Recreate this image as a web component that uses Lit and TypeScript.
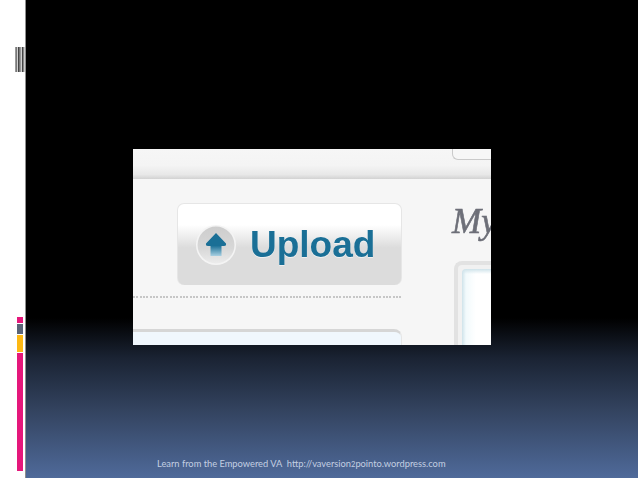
import { LitElement, html, css } from "lit";
import { customElement } from "lit/decorators.js";

@customElement("app-root")
export class AppRoot extends LitElement {
  static styles = css`
    :host { display: block; width: 638px; height: 478px; overflow: hidden; }
    .slide { width: 638px; height: 478px; display: flex; background: #fff; }
    .rail { width: 25px; flex: none; display: flex; flex-direction: column; }
    .bars { width: 10px; height: 25px; margin: 47px 0 0 15px; background: linear-gradient(90deg, #999 0 1px, #777 1px 2px, #d0d0d0 2px 3px, #444 3px 4px, #777 4px 5px, #999 5px 6px, #d0d0d0 6px 7px, #444 7px 8px, #888 8px 9px, #ccc 9px 10px); }
    .stack { width: 6px; margin: 245px 0 0 17px; display: flex; flex-direction: column; }
    .s1 { height: 6px; background: #e5177b; }
    .s2 { height: 10px; margin-top: 1px; background: #5a6478; }
    .s3 { height: 17px; margin-top: 1px; background: #fdb813; }
    .s4 { height: 118px; margin-top: 1px; background: #e5177b; }
    .main { width: 613px; flex: none; box-sizing: border-box; border-left: 1px solid #8f8f8f; background: linear-gradient(180deg, #000 0, #000 318px, #1a2333 358px, #33435f 410px, #4f6a9a 478px); padding: 149px 0 0 107px; display: flex; flex-direction: column; }
    .pic { width: 358px; height: 196px; flex: none; background: #f6f6f6; overflow: hidden; display: flex; flex-direction: column; }
    .topbar { height: 30px; flex: none; background: linear-gradient(180deg, #f6f6f6 0, #f4f4f4 55%, #e8e8e8 85%, #d2d2d2 100%); display: flex; justify-content: flex-end; }
    .tab { width: 39px; height: 11px; box-sizing: border-box; border: 1px solid #cacaca; border-top: 0; border-right: 0; border-bottom-left-radius: 6px; background: #f7f7f7; }
    .body { flex: 1; display: flex; }
    .left { width: 269px; flex: none; display: flex; flex-direction: column; }
    .btn { margin: 24px 0 0 44px; width: 225px; height: 82px; flex: none; box-sizing: border-box; border-radius: 7px; background: linear-gradient(180deg, #fff 0, #fff 26%, #dcdcdc 54%, #dcdcdc 100%); border: 1px solid #e6e6e6; border-bottom: 0; display: flex; align-items: center; padding-left: 17px; gap: 13px; }
    .ic { width: 42px; height: 42px; flex: none; display: block; filter: blur(0.4px); }
    .label { font: bold 37px/1 "Liberation Sans", sans-serif; color: #1a6f96; text-shadow: 0 1px 0 rgba(255,255,255,0.55); filter: blur(0.35px); }
    .dots { margin-top: 11px; height: 2px; flex: none; background: repeating-linear-gradient(90deg, #c6c6c6 0 2px, transparent 2px 3.33px); }
    .panel { margin-top: 31px; height: 17px; flex: none; box-sizing: border-box; background: #f0f7fd; border-top: 3px solid #d6d6d6; border-top-right-radius: 8px; border-right: 1px solid #e6e6e6; }
    .right { flex: 1; display: flex; flex-direction: column; padding-left: 52px; overflow: hidden; }
    .my { margin: 25px 0 0 -2px; font: italic 35px/1 "Liberation Serif", serif; color: #6d6f78; -webkit-text-stroke: 0.6px #6d6f78; white-space: nowrap; height: 36px; filter: blur(0.35px); }
    .frame { flex: 1; margin-top: 21px; box-sizing: border-box; border: 4px solid #e2e2e2; border-right: 0; border-bottom: 0; border-top-left-radius: 8px; padding: 4px 0 0 4px; background: #f1f1f1; }
    .inner { height: 100%; border-top-left-radius: 4px; background: linear-gradient(180deg, #cfe3ea, rgba(255,255,255,0) 5px), linear-gradient(90deg, #cfe3ea, #f2fafc 4px, #fff 14px); }
    .foot { margin: 112px 0 0 24px; font: 9.3px/14px Lato, "Liberation Sans", sans-serif; color: #c3cfe2; white-space: nowrap; }
    .num { font-size: 7.5px; }
  `;
  render() {
    return html`
      <div class="slide">
        <div class="rail">
          <div class="bars"></div>
          <div class="stack"><div class="s1"></div><div class="s2"></div><div class="s3"></div><div class="s4"></div></div>
        </div>
        <div class="main">
          <div class="pic">
            <div class="topbar"><div class="tab"></div></div>
            <div class="body">
              <div class="left">
                <div class="btn">
                  <svg class="ic" viewBox="0 0 42 42">
                    <defs>
                      <linearGradient id="c" x1="0" y1="0" x2="0" y2="1"><stop offset="0" stop-color="#cdcdcd"/><stop offset="0.6" stop-color="#d8d8d8"/><stop offset="1" stop-color="#ececec"/></linearGradient>
                      <linearGradient id="a" x1="0" y1="0" x2="0" y2="1"><stop offset="0.55" stop-color="#1a6f96"/><stop offset="1" stop-color="#a9d0e2"/></linearGradient>
                    </defs>
                    <circle cx="21" cy="21" r="20" fill="#f4f4f4"/>
                    <circle cx="21" cy="21" r="18.5" fill="url(#c)"/>
                    <path d="M21 9 L31 19.5 Q31.5 22 29 22 H26.5 V32 H15.5 V22 H13 Q10.5 22 11 19.5 Z" fill="url(#a)"/>
                  </svg>
                  <span class="label">Upload</span>
                </div>
                <div class="dots"></div>
                <div class="panel"></div>
              </div>
              <div class="right">
                <div class="my">My</div>
                <div class="frame"><div class="inner"></div></div>
              </div>
            </div>
          </div>
          <div class="foot">Learn from the Empowered VA&nbsp; http://vaversion<span class="num">2</span>pointo.wordpress.com</div>
        </div>
      </div>
    `;
  }
}
